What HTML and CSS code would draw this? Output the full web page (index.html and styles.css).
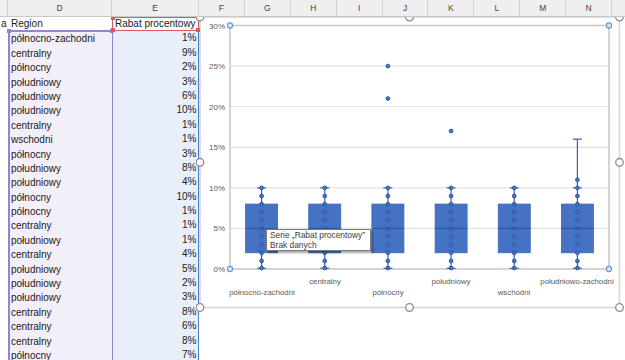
FILE: index.html
```html
<!DOCTYPE html>
<html lang="pl">
<head>
<meta charset="utf-8">
<title>Arkusz</title>
<link rel="stylesheet" href="styles.css">
</head>
<body>
<div class="sheet">
  <div class="colhead">
    <div class="ch ch-c"></div>
    <div class="ch ch-d">D</div>
    <div class="ch ch-e">E</div>
    <div class="ch ch-n">F</div>
    <div class="ch ch-n">G</div>
    <div class="ch ch-n">H</div>
    <div class="ch ch-n">I</div>
    <div class="ch ch-n">J</div>
    <div class="ch ch-n">K</div>
    <div class="ch ch-n">L</div>
    <div class="ch ch-n">M</div>
    <div class="ch ch-n">N</div>
    <div class="ch ch-rest"></div>
  </div>
  <div class="grid">
    <div class="col col-c">
      <div class="cell">a</div>
    </div>
    <div class="col col-d">
      <div class="cell hdr-d">Region<span class="hnd hnd-pl"></span><span class="hnd hnd-pr"></span></div>
      <div class="sel-d">
        <div class="cell">północno-zachodni</div>
        <div class="cell">centralny</div>
        <div class="cell">północny</div>
        <div class="cell">południowy</div>
        <div class="cell">południowy</div>
        <div class="cell">południowy</div>
        <div class="cell">centralny</div>
        <div class="cell">wschodni</div>
        <div class="cell">północny</div>
        <div class="cell">południowy</div>
        <div class="cell">południowy</div>
        <div class="cell">północny</div>
        <div class="cell">północny</div>
        <div class="cell">centralny</div>
        <div class="cell">południowy</div>
        <div class="cell">centralny</div>
        <div class="cell">południowy</div>
        <div class="cell">południowy</div>
        <div class="cell">południowy</div>
        <div class="cell">centralny</div>
        <div class="cell">centralny</div>
        <div class="cell">centralny</div>
        <div class="cell">północny</div>
      </div>
    </div>
    <div class="col col-e">
      <div class="cell hdr-e">Rabat procentowy<span class="hnd hnd-rtl"></span><span class="hnd hnd-rbl"></span><span class="hnd hnd-rbr"></span></div>
      <div class="sel-e">
        <div class="cell num">1%</div>
        <div class="cell num">9%</div>
        <div class="cell num">2%</div>
        <div class="cell num">3%</div>
        <div class="cell num">6%</div>
        <div class="cell num">10%</div>
        <div class="cell num">1%</div>
        <div class="cell num">1%</div>
        <div class="cell num">3%</div>
        <div class="cell num">8%</div>
        <div class="cell num">4%</div>
        <div class="cell num">10%</div>
        <div class="cell num">1%</div>
        <div class="cell num">1%</div>
        <div class="cell num">1%</div>
        <div class="cell num">4%</div>
        <div class="cell num">5%</div>
        <div class="cell num">2%</div>
        <div class="cell num">3%</div>
        <div class="cell num">8%</div>
        <div class="cell num">6%</div>
        <div class="cell num">8%</div>
        <div class="cell num">7%</div>
      </div>
    </div>
    <div class="col col-rest"></div>
  </div>

  <div class="chart">
    <svg class="chart-svg" width="429" height="299" viewBox="196 13 429 299" xmlns="http://www.w3.org/2000/svg">
      <defs>
        <g id="bx">
          <line x1="0" y1="269" x2="0" y2="187.83" stroke="#3562b4" stroke-width="1.2"/>
          <line x1="-4.5" y1="187.83" x2="4.5" y2="187.83" stroke="#3562b4" stroke-width="1.2"/>
          <line x1="-4.5" y1="268.3" x2="4.5" y2="268.3" stroke="#3562b4" stroke-width="1.2"/>
          <rect x="-16" y="204.07" width="32" height="48.7" fill="#4472c4" stroke="#3a66b8" stroke-width="0.8"/>
          <line x1="-16" y1="228.42" x2="16" y2="228.42" stroke="#2f5597" stroke-width="1"/>
          <g fill="#4472c4" stroke="#2b54a3" stroke-width="0.9">
            <circle cx="0" cy="268" r="1.9"/>
            <circle cx="0" cy="260.88" r="1.9"/>
            <circle cx="0" cy="252.77" r="1.9"/>
            <circle cx="0" cy="244.65" r="1.9"/>
            <circle cx="0" cy="236.53" r="1.9"/>
            <circle cx="0" cy="220.3" r="1.9"/>
            <circle cx="0" cy="212.18" r="1.9"/>
            <circle cx="0" cy="204.07" r="1.9"/>
            <circle cx="0" cy="195.95" r="1.9"/>
            <circle cx="0" cy="187.83" r="1.9"/>
          </g>
          <path d="M-2.6,225.8 L2.6,231 M-2.6,231 L2.6,225.8" stroke="#2f5597" stroke-width="1" fill="none"/>
        </g>
      </defs>

      <rect x="200" y="17" width="419.5" height="290.5" fill="#fff" stroke="#d6d6d6" stroke-width="1.6"/>

      <g stroke="#e4e4e4" stroke-width="1.3">
        <line x1="230" y1="66.08" x2="609" y2="66.08"/>
        <line x1="230" y1="106.67" x2="609" y2="106.67"/>
        <line x1="230" y1="147.25" x2="609" y2="147.25"/>
        <line x1="230" y1="187.83" x2="609" y2="187.83"/>
        <line x1="230" y1="228.42" x2="609" y2="228.42"/>
      </g>
      <rect x="230" y="25.5" width="379" height="243.5" fill="none" stroke="#c6c6c6" stroke-width="1.5"/>

      <g class="ylab" font-size="8" fill="#595959" text-anchor="end">
        <text x="225" y="28.5">30%</text>
        <text x="225" y="69">25%</text>
        <text x="225" y="109.6">20%</text>
        <text x="225" y="150.2">15%</text>
        <text x="225" y="190.8">10%</text>
        <text x="225" y="231.4">5%</text>
        <text x="225" y="272">0%</text>
      </g>

      <use href="#bx" transform="translate(261.6,0)"/>
      <use href="#bx" transform="translate(324.75,0)"/>
      <use href="#bx" transform="translate(387.9,0)"/>
      <use href="#bx" transform="translate(451.1,0)"/>
      <use href="#bx" transform="translate(514.25,0)"/>
      <line x1="577.4" y1="187.83" x2="577.4" y2="139.13" stroke="#3562b4" stroke-width="1.2"/>
      <line x1="572.9" y1="139.13" x2="581.9" y2="139.13" stroke="#3562b4" stroke-width="1.2"/>
      <use href="#bx" transform="translate(577.4,0)"/>
      <g fill="#4472c4" stroke="#2b54a3" stroke-width="0.9">
        <circle cx="577.4" cy="179.72" r="1.9"/>
        <circle cx="387.9" cy="66.08" r="1.9"/>
        <circle cx="387.9" cy="98.55" r="1.9"/>
        <circle cx="451.1" cy="131.02" r="1.9"/>
      </g>

      <g class="xlab" font-size="7.8" fill="#595959" text-anchor="middle">
        <text x="262" y="294.5">północno-zachodni</text>
        <text x="325" y="284">centralny</text>
        <text x="388" y="294.5">północny</text>
        <text x="451" y="284">południowy</text>
        <text x="514" y="294.5">wschodni</text>
        <text x="577" y="284">południowo-zachodni</text>
      </g>

      <g fill="#dbe9f7" stroke="#5b9bd5" stroke-width="1.1">
        <circle cx="230" cy="25.5" r="2.6"/>
        <circle cx="609" cy="25.5" r="2.6"/>
        <circle cx="230" cy="269" r="2.6"/>
        <circle cx="609" cy="269" r="2.6"/>
      </g>

      <g fill="#fff" stroke="#8c8c8c" stroke-width="1.3">
        <circle cx="200" cy="17" r="3.8"/>
        <circle cx="409.5" cy="17" r="3.8"/>
        <circle cx="619.5" cy="17" r="3.8"/>
        <circle cx="200" cy="162.3" r="3.8"/>
        <circle cx="619.5" cy="162.3" r="3.8"/>
        <circle cx="200" cy="307.5" r="3.8"/>
        <circle cx="409.5" cy="307.5" r="3.8"/>
        <circle cx="619.5" cy="307.5" r="3.8"/>
      </g>
    </svg>
    <div class="tooltip">
      <div>Serie „Rabat procentowy”</div>
      <div>Brak danych</div>
    </div>
  </div>
</div>
</body>
</html>
```

FILE: styles.css
```css
html, body {
  margin: 0;
  padding: 0;
  background: #fff;
}
body {
  width: 625px;
  height: 360px;
  overflow: hidden;
  font-family: "Liberation Sans", Arial, sans-serif;
}
.sheet {
  position: relative;
  width: 625px;
  height: 360px;
  overflow: hidden;
}
.colhead {
  position: relative;
  z-index: 3;
  display: flex;
  height: 17px;
  background: #efefef;
  border-bottom: 1px solid #c9c9c9;
  box-sizing: border-box;
}
.ch {
  flex: none;
  box-sizing: border-box;
  border-right: 1px solid #d2d2d2;
  text-align: center;
  font-size: 8.5px;
  line-height: 16px;
  color: #444;
}
.ch-c { width: 8px; }
.ch-d { width: 104px; }
.ch-e { width: 87px; }
.ch-n { width: 45.9px; }
.ch-rest { flex: 1; border-right: none; }

.grid {
  display: flex;
}
.col {
  flex: none;
  display: flex;
  flex-direction: column;
}
.col-c { width: 8px; }
.col-d { width: 104px; }
.col-e { width: 87px; }
.col-rest { flex: 1; }

.cell {
  position: relative;
  height: 14.4px;
  line-height: 14.4px;
  font-size: 10px;
  color: #1a1a1a;
  white-space: nowrap;
  padding: 0 3px;
  box-sizing: border-box;
}
.col-c .cell {
  padding: 0 0 0 1px;
  overflow: visible;
}
.num {
  text-align: right;
  padding-right: 3px;
}
.hdr-d {
  padding-left: 3px;
}
.hdr-e {
  border: 1px solid #d65a5f;
  height: 14.4px;
  line-height: 12.4px;
  padding-left: 2px;
  overflow: visible;
}
.sel-d {
  background: #f3eff9;
  border-left: 2px solid #9a80cf;
  border-top: 2px solid #9a80cf;
  margin-top: -1px;
  height: 400px;
  box-sizing: border-box;
}
.sel-d .cell {
  padding-left: 1px;
}
.sel-e {
  background: #e9effa;
  border-left: 1.5px solid #8f85d0;
  border-right: 1.5px solid #4f7fce;
  height: 400px;
  box-sizing: border-box;
}
.sel-e .cell {
  padding-right: 1.5px;
}

.hnd {
  position: absolute;
  width: 4px;
  height: 4px;
  z-index: 2;
}
.hnd-pl { left: -1px; bottom: -2px; background: #9a80cf; }
.hnd-pr { right: -2px; bottom: -2px; background: #9a80cf; }
.hnd-rtl { left: -2px; top: -2px; background: #d65a5f; }
.hnd-rbl { left: -2px; bottom: -2px; background: #d65a5f; }
.hnd-rbr { right: -2px; bottom: -2px; background: #d65a5f; }

.chart {
  position: absolute;
  left: 196px;
  top: 13px;
  width: 429px;
  height: 299px;
  z-index: 1;
}
.chart-svg {
  display: block;
  font-family: "Liberation Sans", Arial, sans-serif;
}
.tooltip {
  position: absolute;
  left: 70px;
  top: 216px;
  width: 105px;
  height: 22px;
  box-sizing: border-box;
  background: #fff;
  border: 1px solid #7a7a7a;
  box-shadow: 2px 2px 2px rgba(0, 0, 0, 0.35);
  padding: 0 3px;
  font-size: 8.4px;
  line-height: 10px;
  color: #3c3c3c;
  white-space: nowrap;
}
```
